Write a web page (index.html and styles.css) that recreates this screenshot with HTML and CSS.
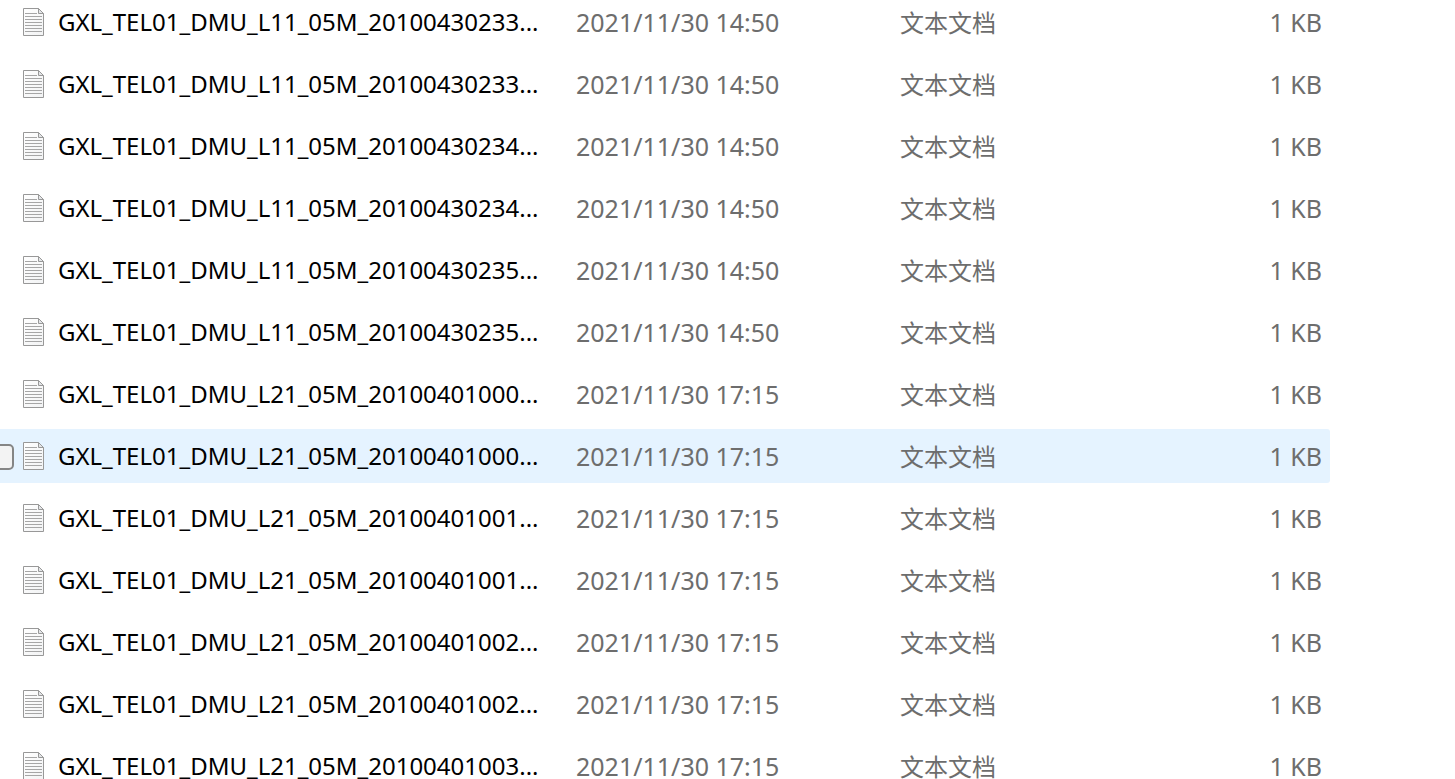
FILE: index.html
```
<!DOCTYPE html>
<html lang="zh-CN">
<head>
  <meta charset="UTF-8"/>
  <title>文件列表</title>
  <meta name="viewport" content="width=device-width,initial-scale=1"/>
  <link rel="stylesheet" href="styles.css">
</head>
<body>

  <svg class="sprite" aria-hidden="true">
    <defs>
      <linearGradient id="paper" x1="0" y1="0" x2="1" y2="1">
        <stop offset="0" stop-color="#ffffff"/>
        <stop offset="1" stop-color="#f2f3f4"/>
      </linearGradient>
    </defs>
    <symbol id="txt" viewBox="0 0 21 28">
      <path d="M.5.5H15.500L20.500 5.500V27.500H.5Z" fill="url(#paper)" stroke="#989898"/>
      <path d="M15.500.5V5.500H20.500Z" fill="#e4e6e8" stroke="#989898"/>
      <path d="M2 5.500H14M2 8.500H19M2 11.500H19M2 14.500H19M2 17.500H19M2 20.500H19M2 23.500H19" stroke="#a6a6a6" fill="none"/>
    </symbol>
  </svg>

  <main class="pane">
    <table class="files">
      <colgroup>
        <col class="col-check"><col class="col-name"><col class="col-date"><col class="col-type"><col class="col-size">
      </colgroup>
      <tbody id="rows"></tbody>
    </table>
  </main>

  <script>
    const files = [
      ["GXL_TEL01_DMU_L11_05M_20100430233...", "2021/11/30 14:50"],
      ["GXL_TEL01_DMU_L11_05M_20100430233...", "2021/11/30 14:50"],
      ["GXL_TEL01_DMU_L11_05M_20100430234...", "2021/11/30 14:50"],
      ["GXL_TEL01_DMU_L11_05M_20100430234...", "2021/11/30 14:50"],
      ["GXL_TEL01_DMU_L11_05M_20100430235...", "2021/11/30 14:50"],
      ["GXL_TEL01_DMU_L11_05M_20100430235...", "2021/11/30 14:50"],
      ["GXL_TEL01_DMU_L21_05M_20100401000...", "2021/11/30 17:15"],
      ["GXL_TEL01_DMU_L21_05M_20100401000...", "2021/11/30 17:15"],
      ["GXL_TEL01_DMU_L21_05M_20100401001...", "2021/11/30 17:15"],
      ["GXL_TEL01_DMU_L21_05M_20100401001...", "2021/11/30 17:15"],
      ["GXL_TEL01_DMU_L21_05M_20100401002...", "2021/11/30 17:15"],
      ["GXL_TEL01_DMU_L21_05M_20100401002...", "2021/11/30 17:15"],
      ["GXL_TEL01_DMU_L21_05M_20100401003...", "2021/11/30 17:15"]
    ];
    const active = 7;

    // Only the active row shows its tick box
    document.getElementById("rows").innerHTML = files.map(([name, date], i) => `
      <tr class="${i === active ? "active" : ""}">
        <td class="tick">${i === active ? `<input type="checkbox" id="f${i}" class="check">` : ""}</td>
        <td class="name"><label class="file" for="f${i}"><svg class="icon" aria-hidden="true"><use href="#txt"/></svg><span>${name}</span></label></td>
        <td>${date}</td>
        <td class="type">文本文档</td>
        <td class="size">1 KB</td>
      </tr>`).join("");
  </script>
</body>
</html>
```
FILE: styles.css
```
* { box-sizing:border-box; }
body { margin:0; background:#fff; color:#6d6d6d; font-family:"Noto Sans","Noto Sans CJK SC",sans-serif; font-size:25px; line-height:34px; }
.sprite { position:absolute; width:0; height:0; }

/* the list is scrolled a little down and to the right */
.pane { height:100vh; overflow:hidden; }
.files { width:calc(100% - 113px); margin:-13px 0 0 -12px; table-layout:fixed; border-collapse:separate; border-spacing:0 8px; }
.col-check { width:35px; }
.col-name { width:553px; }
.col-date { width:324px; }
.col-type { width:280px; }

td { height:54px; padding:0; vertical-align:middle; white-space:nowrap; }
.active td { background:#e5f3ff; }
.active td:last-child { border-radius:0 3px 3px 0; }
.name { color:#000; font-size:24px; }
.file { display:flex; align-items:center; gap:14px; }
.icon { width:21px; height:28px; flex:none; }
td.tick, td.type { padding-top:2px; }
.type { font-size:24px; }
.size { text-align:right; }
td.size { padding-right:8px; }
.check { appearance:none; display:block; width:26px; height:26px; margin:0; background:#f3f3f3; border:2px solid #858585; border-radius:5px; }
```
